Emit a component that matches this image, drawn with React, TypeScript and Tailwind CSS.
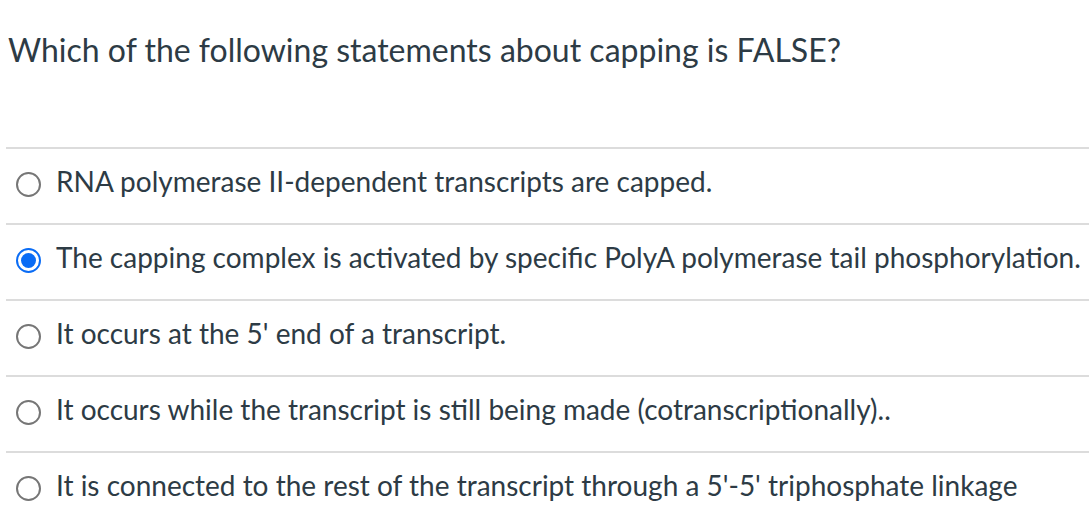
const options = [
  { label: "RNA polymerase II-dependent transcripts are capped.", checked: false },
  { label: "The capping complex is activated by specific PolyA polymerase tail phosphorylation.", checked: true },
  { label: "It occurs at the 5' end of a transcript.", checked: false },
  { label: "It occurs while the transcript is still being made (cotranscriptionally)..", checked: false },
  { label: "It is connected to the rest of the transcript through a 5'-5' triphosphate linkage", checked: false },
];

function Radio({ checked }: { checked: boolean }) {
  if (checked) {
    return (
      <div className="w-[25px] h-[25px] mb-[3px] shrink-0 rounded-full border-[2.5px] border-[#0a6cf5] flex items-center justify-center">
        <div className="w-[15px] h-[15px] rounded-full bg-[#0a6cf5]" />
      </div>
    );
  }
  return <div className="w-[25px] h-[25px] mb-[3px] shrink-0 rounded-full border-[2px] border-[#767676]" />;
}

export default function App() {
  return (
    <div className="w-[1089px] h-[529px] bg-white overflow-hidden font-['Lato','Liberation_Sans',sans-serif] text-[#2d3b45]">
      <div className="pl-[8px] pt-[28px] h-[147px]">
        <h1 className="text-[32px] leading-[44px] whitespace-nowrap">
          Which of the following statements about capping is FALSE?
        </h1>
      </div>
      <div className="pl-[6px]">
        {options.map((o, i) => (
          <div key={i} className="border-t-2 border-[#dcdcdc] h-[76px] flex items-center gap-[15px] pl-[10px]">
            <Radio checked={o.checked} />
            <span className="text-[28px] mb-[10px] whitespace-nowrap">{o.label}</span>
          </div>
        ))}
      </div>
    </div>
  );
}
